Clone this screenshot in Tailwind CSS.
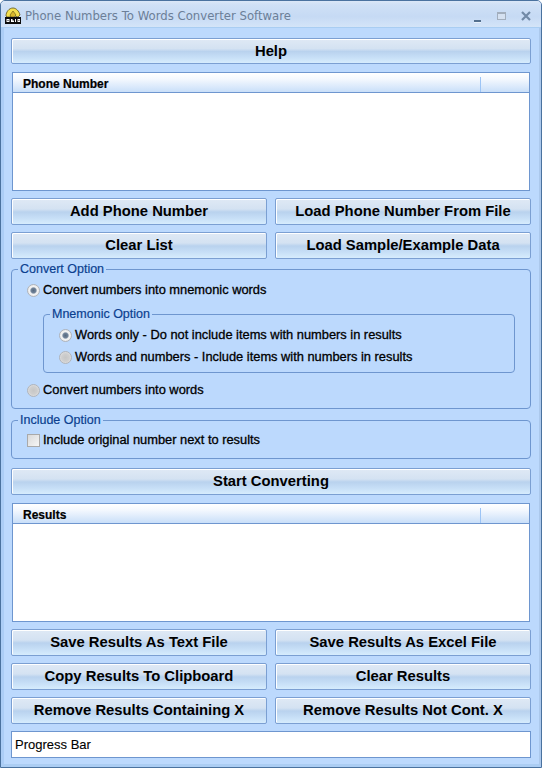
<!DOCTYPE html>
<html>
<head>
    <script src="https://cdn.jsdelivr.net/npm/@tailwindcss/browser@4"></script>
</head>
<body class="m-0 bg-white">
    <div class="w-[542px] h-[768px] flex flex-col overflow-hidden rounded-t-[5px] border border-[#4a729f] bg-[#bcd9fd] font-['Liberation_Sans',Arial,sans-serif] text-black">
        <!-- Title bar -->
        <div class="h-[27px] shrink-0 flex items-center pl-[3px] border-b border-b-[#a9cdf2] bg-[linear-gradient(#dbe7f7_0%,#cfe0f6_15%,#c6daf4_60%,#d4e4f8_100%)]">
            <svg width="18" height="18" viewBox="0 0 18 18" class="shrink-0 mt-[3px]">
                <path d="M2 9 C2 5 5 1 9 1 C12 1 15 4 16 8 L14 10 L11 9 L9 6 L7 8 L7 10 L3 10 Z" fill="#f4e04e" stroke="#5d5010" stroke-width="0.8"/>
                <path d="M6 8 L9 4 L12 8 L10 10 L7 10 Z" fill="#d9b92e" stroke="#5d5010" stroke-width="0.6"/>
                <rect x="1" y="10" width="16" height="7" fill="#0d0d0d"/>
                <path d="M2.500 12h3v3h-3zM7 12h1.500v1.500h1.500v1.500h-3zM11 12h1v3h-1zM13.500 12h2.500v3h-2.500z" fill="#fff"/>
                <path d="M3.500 13h1v1h-1zM14.500 13h0.800v1h-0.800z" fill="#0d0d0d"/>
            </svg>
            <span class="ml-[3px] mt-[5px] font-['DejaVu_Sans',sans-serif] text-[11.700px] text-[#6c7f98]">Phone Numbers To Words Converter Software</span>
            <!-- Window buttons -->
            <div class="ml-auto flex items-center mt-[5px]">
                <div class="w-[7px] h-[2px] mt-[8px] bg-[#54708f] shadow-[0_1px_0_#e8f1fb]"></div>
                <div class="ml-[16px] w-[9px] h-[8px] border border-[#a2aebd] border-t-2 bg-[#d5e1f1] mb-[1px]"></div>
                <svg width="10" height="10" viewBox="0 0 10 10" class="ml-[15px] mr-[10px] mb-[2px]">
                    <path d="M1 1 L9 9 M9 1 L1 9" stroke="#7189a6" stroke-width="2.200"/>
                </svg>
            </div>
        </div>

        <!-- Window body -->
        <div class="flex-1 flex flex-col border-l-[3px] border-l-[#abcdf6] border-r-[2px] border-r-[#abc8ec] border-b-[3px] border-b-[#abcdf3] pl-[7px] pr-[8px] pt-[10px]">
            <button class="h-[26px] w-[520px] shrink-0 rounded-[2px] border border-[#7b9fd2] bg-[linear-gradient(#dfe9f5_0%,#d4e2f2_40%,#b9d2ee_52%,#c6def6_75%,#d6ecfd_100%)] shadow-[inset_1px_1px_0_#fff] text-[14.800px] font-bold">Help</button>

            <!-- Phone number list -->
            <div class="mt-[8px] ml-px w-[518px] h-[119px] shrink-0 bg-white border border-[#6e96cf]">
                <div class="h-[20px] flex items-center pt-[4px] border-b border-b-[#6e96cf] bg-[linear-gradient(#ffffff_0%,#f2f7fe_35%,#c9dff9_100%)]">
                    <span class="w-[468px] pl-[10px] text-[12px] font-bold [-webkit-text-stroke:0.2px_black] border-r border-r-[#9cc4f5] leading-[15px]">Phone Number</span>
                </div>
            </div>

            <div class="mt-[7px] grid grid-cols-[256px_256px] gap-x-[8px] gap-y-[7px] shrink-0">
                <button class="h-[27px] rounded-[2px] border border-[#7b9fd2] bg-[linear-gradient(#dfe9f5_0%,#d4e2f2_40%,#b9d2ee_52%,#c6def6_75%,#d6ecfd_100%)] shadow-[inset_1px_1px_0_#fff] text-[14.800px] font-bold">Add Phone Number</button>
                <button class="h-[27px] rounded-[2px] border border-[#7b9fd2] bg-[linear-gradient(#dfe9f5_0%,#d4e2f2_40%,#b9d2ee_52%,#c6def6_75%,#d6ecfd_100%)] shadow-[inset_1px_1px_0_#fff] text-[14.800px] font-bold">Load Phone Number From File</button>
                <button class="h-[27px] rounded-[2px] border border-[#7b9fd2] bg-[linear-gradient(#dfe9f5_0%,#d4e2f2_40%,#b9d2ee_52%,#c6def6_75%,#d6ecfd_100%)] shadow-[inset_1px_1px_0_#fff] text-[14.800px] font-bold">Clear List</button>
                <button class="h-[27px] rounded-[2px] border border-[#7b9fd2] bg-[linear-gradient(#dfe9f5_0%,#d4e2f2_40%,#b9d2ee_52%,#c6def6_75%,#d6ecfd_100%)] shadow-[inset_1px_1px_0_#fff] text-[14.800px] font-bold">Load Sample/Example Data</button>
            </div>

            <!-- Convert Option -->
            <fieldset class="mt-[3px] w-[520px] h-[147px] shrink-0 rounded-[4px] border border-[#6e96cf]">
                <legend class="ml-[6px] px-[2px] text-[12.500px] leading-[14px] text-[#0b3f8f] [-webkit-text-stroke:0.2px_#0b3f8f]">Convert Option</legend>
                <div class="pl-[15px]">
                    <label class="mt-[7px] flex items-center gap-[3px] h-[14px] text-[12.850px] [-webkit-text-stroke:0.3px_black]">
                        <span class="w-[13px] h-[13px] rounded-full border border-[#b0b4ba] bg-[radial-gradient(circle,#56697f_0%,#72849a_32%,#f4f4f4_48%,#dedede_100%)]"></span>
                        Convert numbers into mnemonic words
                    </label>
                    <fieldset class="mt-[10px] ml-[16px] w-[472px] h-[66px] rounded-[4px] border border-[#6e96cf]">
                        <legend class="ml-[6px] px-[2px] text-[12.500px] leading-[14px] text-[#0b3f8f] [-webkit-text-stroke:0.2px_#0b3f8f]">Mnemonic Option</legend>
                        <div class="pl-[15px]">
                            <label class="mt-[7px] flex items-center gap-[3px] h-[14px] text-[12.850px] [-webkit-text-stroke:0.3px_black]">
                                <span class="w-[13px] h-[13px] rounded-full border border-[#b0b4ba] bg-[radial-gradient(circle,#56697f_0%,#72849a_32%,#f4f4f4_48%,#dedede_100%)]"></span>
                                Words only - Do not include items with numbers in results
                            </label>
                            <label class="mt-[8px] flex items-center gap-[3px] h-[14px] text-[12.850px] [-webkit-text-stroke:0.3px_black]">
                                <span class="w-[13px] h-[13px] rounded-full border border-[#b0b4ba] bg-[radial-gradient(circle,#c6c6c6_0%,#cfcfcf_50%,#f0f0f0_100%)]"></span>
                                Words and numbers - Include items with numbers in results
                            </label>
                        </div>
                    </fieldset>
                    <label class="mt-[10px] flex items-center gap-[3px] h-[14px] text-[12.850px] [-webkit-text-stroke:0.3px_black]">
                        <span class="w-[13px] h-[13px] rounded-full border border-[#b0b4ba] bg-[radial-gradient(circle,#c6c6c6_0%,#cfcfcf_50%,#f0f0f0_100%)]"></span>
                        Convert numbers into words
                    </label>
                </div>
            </fieldset>

            <!-- Include Option -->
            <fieldset class="mt-[4px] w-[520px] h-[46px] shrink-0 rounded-[4px] border border-[#6e96cf]">
                <legend class="ml-[6px] px-[2px] text-[12.500px] leading-[14px] text-[#0b3f8f] [-webkit-text-stroke:0.2px_#0b3f8f]">Include Option</legend>
                <div class="pl-[15px]">
                    <label class="mt-[6px] flex items-center gap-[3px] h-[14px] text-[12.850px] [-webkit-text-stroke:0.3px_black]">
                        <span class="w-[13px] h-[13px] border border-[#a9a9a9] bg-[linear-gradient(135deg,#d9d9d9,#f6f6f6)]"></span>
                        Include original number next to results
                    </label>
                </div>
            </fieldset>

            <button class="mt-[9px] h-[27px] w-[520px] shrink-0 rounded-[2px] border border-[#7b9fd2] bg-[linear-gradient(#dfe9f5_0%,#d4e2f2_40%,#b9d2ee_52%,#c6def6_75%,#d6ecfd_100%)] shadow-[inset_1px_1px_0_#fff] text-[14.800px] font-bold">Start Converting</button>

            <!-- Results list -->
            <div class="mt-[8px] ml-px w-[518px] h-[119px] shrink-0 bg-white border border-[#6e96cf]">
                <div class="h-[20px] flex items-center pt-[4px] border-b border-b-[#6e96cf] bg-[linear-gradient(#ffffff_0%,#f2f7fe_35%,#c9dff9_100%)]">
                    <span class="w-[468px] pl-[10px] text-[12px] font-bold [-webkit-text-stroke:0.2px_black] border-r border-r-[#9cc4f5] leading-[15px]">Results</span>
                </div>
            </div>

            <div class="mt-[7px] grid grid-cols-[256px_256px] gap-x-[8px] gap-y-[7px] shrink-0">
                <button class="h-[27px] rounded-[2px] border border-[#7b9fd2] bg-[linear-gradient(#dfe9f5_0%,#d4e2f2_40%,#b9d2ee_52%,#c6def6_75%,#d6ecfd_100%)] shadow-[inset_1px_1px_0_#fff] text-[14.800px] font-bold">Save Results As Text File</button>
                <button class="h-[27px] rounded-[2px] border border-[#7b9fd2] bg-[linear-gradient(#dfe9f5_0%,#d4e2f2_40%,#b9d2ee_52%,#c6def6_75%,#d6ecfd_100%)] shadow-[inset_1px_1px_0_#fff] text-[14.800px] font-bold">Save Results As Excel File</button>
                <button class="h-[27px] rounded-[2px] border border-[#7b9fd2] bg-[linear-gradient(#dfe9f5_0%,#d4e2f2_40%,#b9d2ee_52%,#c6def6_75%,#d6ecfd_100%)] shadow-[inset_1px_1px_0_#fff] text-[14.800px] font-bold">Copy Results To Clipboard</button>
                <button class="h-[27px] rounded-[2px] border border-[#7b9fd2] bg-[linear-gradient(#dfe9f5_0%,#d4e2f2_40%,#b9d2ee_52%,#c6def6_75%,#d6ecfd_100%)] shadow-[inset_1px_1px_0_#fff] text-[14.800px] font-bold">Clear Results</button>
                <button class="h-[27px] rounded-[2px] border border-[#7b9fd2] bg-[linear-gradient(#dfe9f5_0%,#d4e2f2_40%,#b9d2ee_52%,#c6def6_75%,#d6ecfd_100%)] shadow-[inset_1px_1px_0_#fff] text-[14.800px] font-bold">Remove Results Containing X</button>
                <button class="h-[27px] rounded-[2px] border border-[#7b9fd2] bg-[linear-gradient(#dfe9f5_0%,#d4e2f2_40%,#b9d2ee_52%,#c6def6_75%,#d6ecfd_100%)] shadow-[inset_1px_1px_0_#fff] text-[14.800px] font-bold">Remove Results Not Cont. X</button>
            </div>

            <!-- Progress bar -->
            <div class="mt-[7px] w-[520px] h-[27px] shrink-0 flex items-center pl-[3px] bg-white border border-[#6e96cf] text-[13px] [-webkit-text-stroke:0.1px_black]">Progress Bar</div>
        </div>
    </div>
</body>
</html>
